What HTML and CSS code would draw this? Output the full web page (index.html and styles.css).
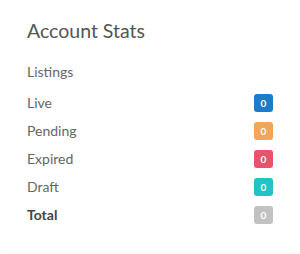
FILE: index.html
```html
<html>

<head>
    <title>Account Stats</title>
    <link rel="stylesheet" href="styles.css">
</head>

<body>

    <div class="card">
        <h2 class="title">Account Stats</h2>
        <div class="subtitle">Listings</div>
        <ul class="stats">
            <li><span>Live</span><span class="badge blue">0</span></li>
            <li><span>Pending</span><span class="badge orange">0</span></li>
            <li><span>Expired</span><span class="badge red">0</span></li>
            <li><span>Draft</span><span class="badge teal">0</span></li>
            <li class="total"><span>Total</span><span class="badge grey">0</span></li>
        </ul>
    </div>

</body>

</html>
```

FILE: styles.css
```css
* {
    margin: 0;
    padding: 0;
    box-sizing: border-box;
}

body {
    font: 14px Lato, "Liberation Sans", sans-serif;
    color: #666666;
    background: #ffffff;
}

.card {
    width: 298px;
    height: 251px;
    padding: 19px 25px 0 27px;
    background: #ffffff;
    box-shadow: 0 1px 2px rgba(0, 0, 0, 0.03);
}

.title {
    font-size: 19.5px;
    font-weight: 400;
    line-height: 24px;
    color: #555555;
}

.subtitle {
    margin-top: 19px;
    line-height: 20px;
    color: #666666;
}

.stats {
    margin-top: 7px;
}

.stats li {
    list-style: none;
    display: flex;
    justify-content: space-between;
    align-items: center;
    height: 28px;
    line-height: 20px;
}

.stats li.total {
    font-weight: 700;
    color: #444444;
}

.badge {
    width: 19px;
    height: 18px;
    border-radius: 3px;
    color: #ffffff;
    font-size: 10px;
    font-weight: 700;
    line-height: 18px;
    text-align: center;
}

.blue {
    background: #1c7cc7;
}

.orange {
    background: #f5a55a;
}

.red {
    background: #e8526a;
}

.teal {
    background: #22c3c6;
}

.grey {
    background: #c2c2c2;
}
```
